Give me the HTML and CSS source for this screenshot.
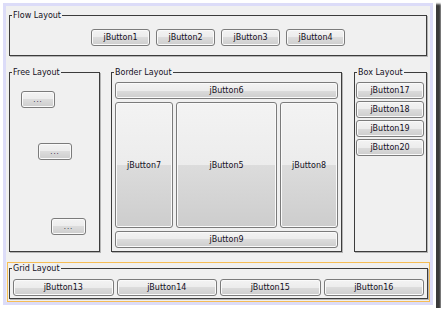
FILE: index.html
```html
<!DOCTYPE html>
<html lang="en">
<head>
	<meta charset="UTF-8">
	<title>Layout demo</title>
	<link rel="stylesheet" href="styles.css">
</head>
<body>

<div class="shot">
	<div class="frame">
		<div class="panel">

			<fieldset class="group flow">
				<legend>Flow Layout</legend>
				<div class="flow-row">
					<button class="btn">jButton1</button>
					<button class="btn">jButton2</button>
					<button class="btn">jButton3</button>
					<button class="btn">jButton4</button>
				</div>
			</fieldset>

			<div class="middle">
				<fieldset class="group free">
					<legend>Free Layout</legend>
					<div class="canvas">
						<button class="btn dots dots1">...</button>
						<button class="btn dots dots2">...</button>
						<button class="btn dots dots3">...</button>
					</div>
				</fieldset>

				<fieldset class="group border">
					<legend>Border Layout</legend>
					<div class="border-grid">
						<button class="btn north">jButton6</button>
						<button class="btn west">jButton7</button>
						<button class="btn center">jButton5</button>
						<button class="btn east">jButton8</button>
						<button class="btn south">jButton9</button>
					</div>
				</fieldset>

				<fieldset class="group box">
					<legend>Box Layout</legend>
					<div class="box-col">
						<button class="btn">jButton17</button>
						<button class="btn">jButton18</button>
						<button class="btn">jButton19</button>
						<button class="btn">jButton20</button>
					</div>
				</fieldset>
			</div>

			<div class="focus">
				<fieldset class="group grid">
					<legend>Grid Layout</legend>
					<div class="grid-row">
						<button class="btn">jButton13</button>
						<button class="btn">jButton14</button>
						<button class="btn">jButton15</button>
						<button class="btn">jButton16</button>
					</div>
				</fieldset>
			</div>

		</div>
	</div>
</div>

</body>
</html>
```

FILE: styles.css
```css
body {
	margin: 0;
	background: #fff;
	font-family: "DejaVu Sans", sans-serif;
	font-size: 8px;
	color: #14101e;
}

/* white margin and drop shadow of the captured window */
.shot {
	width: 430px;
	height: 302px;
	padding: 3px;
	background: #fff;
	box-shadow: 5px 4px 2px #3a3a3a;
}

.frame {
	border: 3px solid #dcdcf8;
	height: 296px;
}

.panel {
	background: #f0f0f0;
	height: 296px;
	box-sizing: border-box;
	padding: 4px 3px 0 3px;
	display: flex;
	flex-direction: column;
}

/* titled borders */
.group {
	margin: 0;
	padding: 0;
	min-width: 0;
	border: 1px solid #3c3c3c;
	box-shadow: 1px 1px 0 #b4b4b4;
}

.group legend {
	margin-left: 2px;
	padding: 0 1px;
	line-height: 11px;
	font-size: 8px;
	color: #14101e;
}

.btn {
	margin: 0;
	padding: 0;
	height: 17px;
	font-family: "DejaVu Sans", sans-serif;
	font-size: 8px;
	color: #14101e;
	border: 1px solid #7b7b7b;
	border-radius: 3px;
	background: linear-gradient(#f3f3f3 0%, #ececec 50%, #dcdcdc 50%, #cdcdcd 100%);
	box-shadow: inset 0 0 0 1px #fafafa;
	white-space: nowrap;
}

.flow-row {
	display: flex;
	justify-content: center;
	gap: 6px;
	padding: 8px 0 9px;
}

.flow-row .btn { width: 59px; }

.middle {
	display: flex;
	height: 185px;
	margin-top: 11px;
}

.free { width: 89px; }
.border { flex: 1; margin: 0 12px 0 11px; }
.box { width: 71px; }

.canvas {
	position: relative;
	height: 173px;
}

.dots {
	position: absolute;
	width: 34px;
	font-size: 7px;
	letter-spacing: 1px;
}

.dots1 { left: 11px; top: 13px; }
.dots2 { left: 28px; top: 65px; }
.dots3 { left: 41px; top: 140px; width: 35px; }

.border-grid {
	display: grid;
	grid-template-columns: 58px 1fr 58px;
	grid-template-rows: 17px 126px 17px;
	gap: 3px;
	padding: 4px 3px 3px;
}

.border-grid .btn { height: auto; }
.north { grid-column: 1 / 4; }
.south { grid-column: 1 / 4; }

.box-col {
	display: flex;
	flex-direction: column;
	gap: 2px;
	padding: 4px 2px 0 1px;
}

.focus {
	margin: 10px -3px 0 -2px;
	border: 1px solid #f6bd55;
	padding: 0 1px 2px;
}

.grid-row {
	display: grid;
	grid-template-columns: repeat(4, 1fr);
	gap: 3px;
	padding: 5px 3px 2px;
}
```
